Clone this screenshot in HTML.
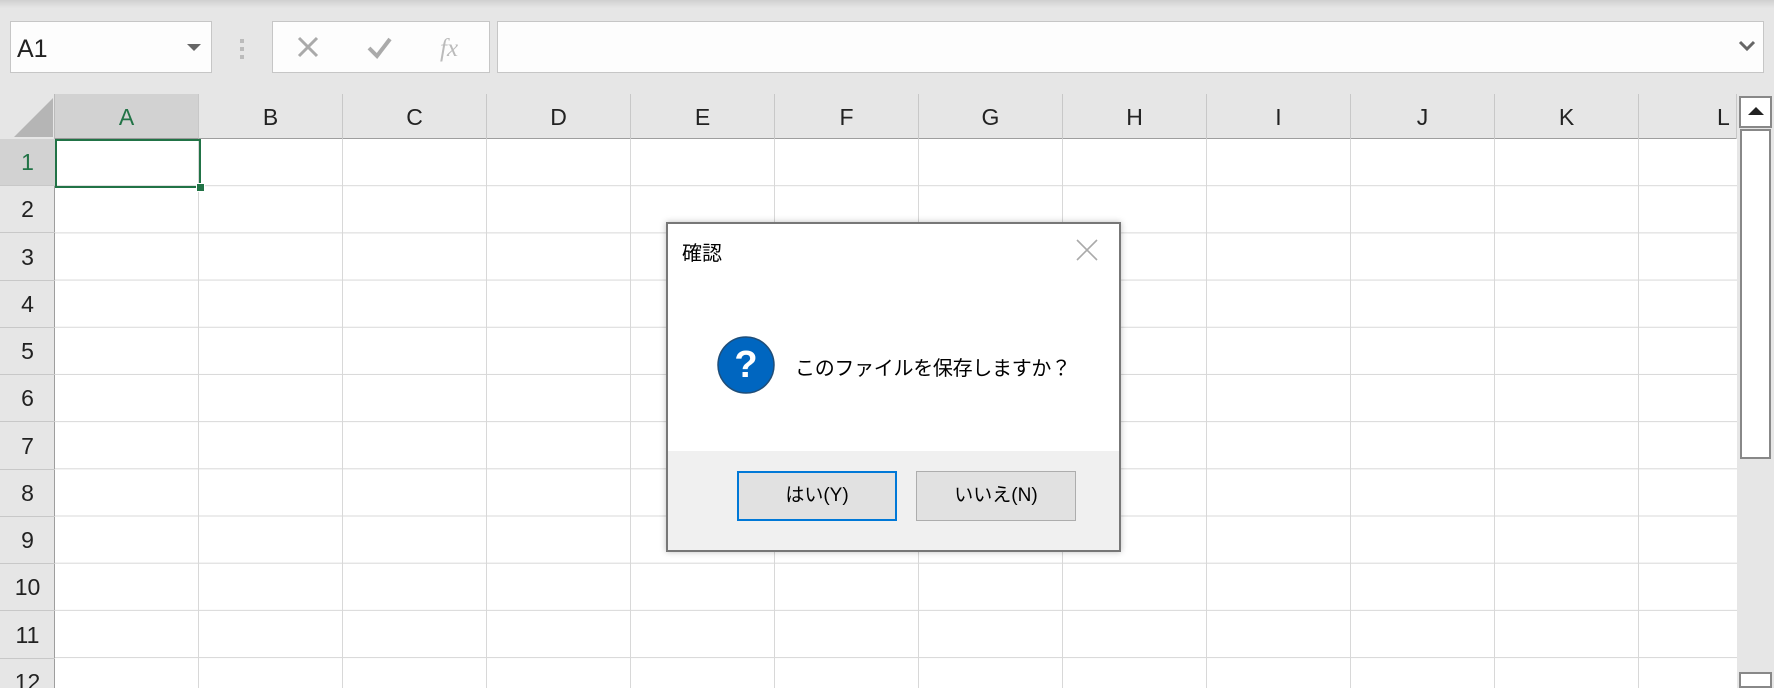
<!DOCTYPE html>
<html style="width:1774px;height:688px;overflow:hidden"><head><meta charset="utf-8"><style>
body{margin:0;width:1774px;height:688px;overflow:hidden;background:#e6e6e6;font-family:"Liberation Sans","Noto Sans CJK JP",sans-serif;position:relative}
.abs{position:absolute}
.box{position:absolute;background:#fdfdfd;border:1px solid #c6c6c6;box-sizing:border-box}
.col{position:absolute;top:94px;height:45px;border-right:1px solid #c8c8c8;box-sizing:border-box;text-align:center;line-height:47px;font-size:23px;color:#222}
.row{position:absolute;left:0;width:55px;border-bottom:1px solid #c8c8c8;box-sizing:border-box;text-align:center;font-size:23px;color:#222}
.btn{position:absolute;top:471px;width:160px;height:50px;box-sizing:border-box;background:#e1e1e1;text-align:center;line-height:46px;font-size:19px;color:#000}
</style></head><body>
<div class="abs" style="left:0;top:0;width:1774px;height:8px;background:linear-gradient(#d0d0d0,#e6e6e6)"></div>
<div class="box" style="left:10px;top:21px;width:202px;height:52px"></div>
<div class="abs" style="left:17px;top:35px;font-size:25px;color:#222">A1</div>
<div class="abs" style="left:187px;top:44px;width:0;height:0;border-left:7px solid transparent;border-right:7px solid transparent;border-top:7px solid #666"></div>
<div class="abs" style="left:240px;top:39px;width:4px;height:4px;background:#bbb;box-shadow:0 8px 0 #bbb,0 16px 0 #bbb"></div>
<div class="box" style="left:272px;top:21px;width:218px;height:52px"></div>
<svg class="abs" style="left:272px;top:21px" width="218" height="52"><path d="M27 17 L45 35 M45 17 L27 35" stroke="#aaa" stroke-width="3"/><path d="M97 27 L105 35 L118 18" stroke="#aaa" stroke-width="4" fill="none"/><text x="168" y="35" font-family="Liberation Serif,serif" font-style="italic" font-size="25" fill="#bbb">fx</text></svg>
<div class="box" style="left:497px;top:21px;width:1267px;height:52px"></div>
<svg class="abs" style="left:1738px;top:40px" width="18" height="12"><path d="M2 2 L9 9 L16 2" stroke="#666" stroke-width="3" fill="none"/></svg>
<div class="abs" style="left:55px;top:139px;width:1682px;height:549px;background-color:#fff;background-image:linear-gradient(90deg,transparent 143px,#d8d8d8 143px),linear-gradient(transparent 46px,#d8d8d8 46px);background-size:144px 47.2px"></div>
<div class="abs" style="left:0;top:94px;width:55px;height:45px;background:#e6e6e6;border-right:1px solid #bbb;box-sizing:border-box"></div>
<svg class="abs" style="left:0;top:94px" width="55" height="45"><path d="M14 43 L53 43 L53 4 Z" fill="#b5b5b5"/></svg>
<div class="abs" style="left:55px;top:138px;width:1682px;height:1px;background:#9e9e9e"></div>
<div class="col" style="left:55px;width:144px;background:#d2d2d2;color:#217346;border-bottom:1px solid #999">A</div>
<div class="col" style="left:199px;width:144px">B</div>
<div class="col" style="left:343px;width:144px">C</div>
<div class="col" style="left:487px;width:144px">D</div>
<div class="col" style="left:631px;width:144px">E</div>
<div class="col" style="left:775px;width:144px">F</div>
<div class="col" style="left:919px;width:144px">G</div>
<div class="col" style="left:1063px;width:144px">H</div>
<div class="col" style="left:1207px;width:144px">I</div>
<div class="col" style="left:1351px;width:144px">J</div>
<div class="col" style="left:1495px;width:144px">K</div>
<div class="col" style="left:1639px;width:98px;text-align:left;padding-left:78px">L</div>
<div class="abs" style="left:54px;top:139px;width:1px;height:549px;background:#9e9e9e"></div>
<div class="row" style="top:139px;height:47px;line-height:47px;background:#d2d2d2;color:#217346">1</div>
<div class="row" style="top:186px;height:47px;line-height:47px">2</div>
<div class="row" style="top:233px;height:48px;line-height:48px">3</div>
<div class="row" style="top:281px;height:47px;line-height:47px">4</div>
<div class="row" style="top:328px;height:47px;line-height:47px">5</div>
<div class="row" style="top:375px;height:47px;line-height:47px">6</div>
<div class="row" style="top:422px;height:48px;line-height:48px">7</div>
<div class="row" style="top:470px;height:47px;line-height:47px">8</div>
<div class="row" style="top:517px;height:47px;line-height:47px">9</div>
<div class="row" style="top:564px;height:47px;line-height:47px">10</div>
<div class="row" style="top:611px;height:48px;line-height:48px">11</div>
<div class="row" style="top:659px;height:29px;line-height:47px;border-bottom:none;overflow:hidden">12</div>
<div class="abs" style="left:55px;top:139px;width:146px;height:49px;border:2px solid #217346;box-sizing:border-box"></div>
<div class="abs" style="left:196px;top:183px;width:7px;height:7px;background:#217346;border:1px solid #fff"></div>
<div class="abs" style="left:1737px;top:94px;width:37px;height:594px;background:#e6e6e6"></div>
<div class="abs" style="left:1739px;top:96px;width:33px;height:32px;background:#fff;border:2px solid #888;box-sizing:border-box"></div>
<div class="abs" style="left:1748px;top:107px;width:0;height:0;border-left:8px solid transparent;border-right:8px solid transparent;border-bottom:8px solid #222"></div>
<div class="abs" style="left:1740px;top:129px;width:31px;height:330px;background:#fff;border:2px solid #888;box-sizing:border-box"></div>
<div class="abs" style="left:1739px;top:672px;width:33px;height:16px;background:#fff;border:2px solid #888;box-sizing:border-box"></div>
<div class="abs" style="left:666px;top:222px;width:455px;height:330px;background:#fff;border:2px solid #777;box-sizing:border-box;box-shadow:0 0 6px rgba(0,0,0,.25)"></div>
<div class="abs" style="left:668px;top:451px;width:451px;height:99px;background:#f0f0f0"></div>
<div class="abs" style="left:682px;top:237px;font-size:20px;color:#000">確認</div>
<svg class="abs" style="left:1076px;top:239px" width="22" height="22"><path d="M1 1 L21 21 M21 1 L1 21" stroke="#aaa" stroke-width="1.6"/></svg>
<svg class="abs" style="left:716px;top:335px" width="60" height="60"><circle cx="30" cy="30" r="28" fill="#0066c0" stroke="#1f4e79" stroke-width="1.5"/><text x="30" y="42" text-anchor="middle" font-size="38" font-weight="bold" fill="#fff" font-family="Liberation Sans,sans-serif">?</text></svg>
<div class="abs" style="left:795px;top:352px;font-size:20px;color:#000;letter-spacing:-0.3px">このファイルを保存しますか？</div>
<div class="btn" style="left:737px;border:2px solid #0078d7">はい(Y)</div>
<div class="btn" style="left:916px;border:1px solid #adadad;line-height:48px">いいえ(N)</div>
</body></html>
